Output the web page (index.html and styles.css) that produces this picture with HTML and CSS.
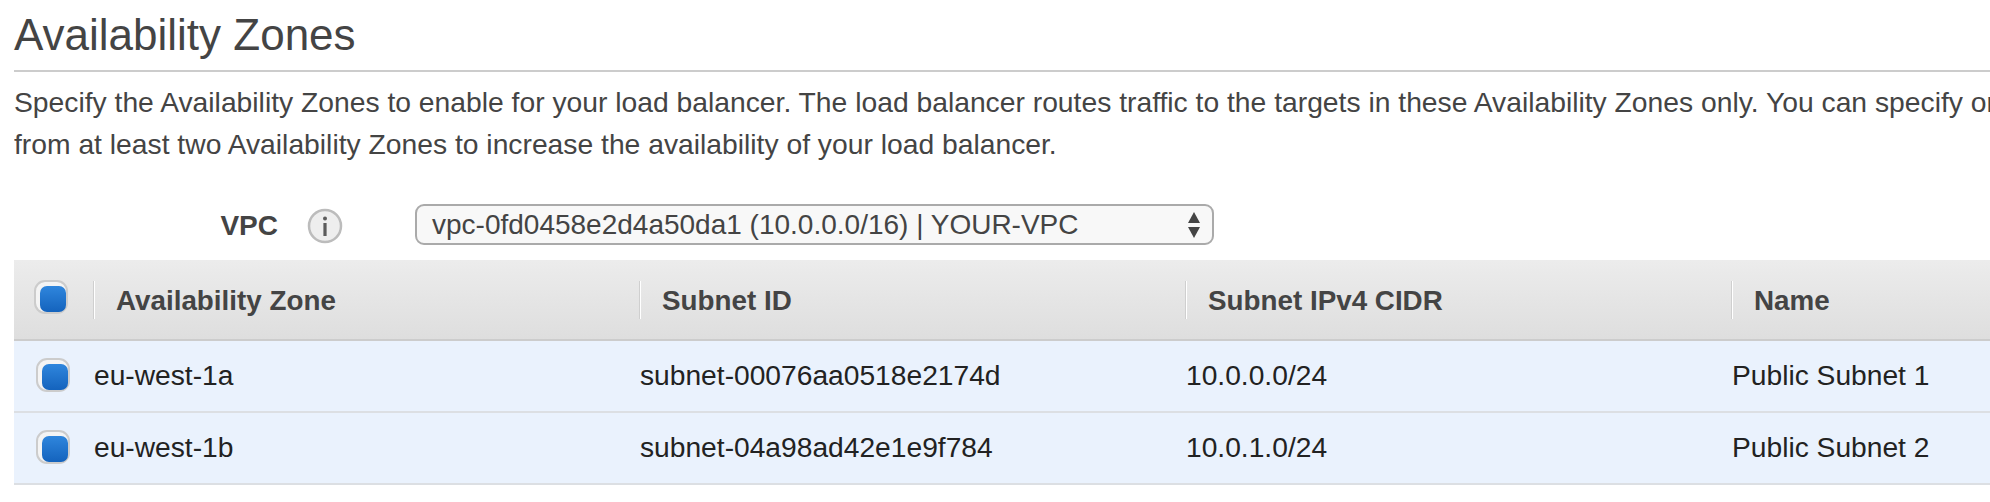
FILE: index.html
```html
<!DOCTYPE html>
<html lang="en">
  <head>
    <title>Availability Zones</title>
    <link rel="stylesheet" href="styles.css">
  </head>
  <body>
    <div class="section">
      <h2 class="section-title">Availability Zones</h2>
      <p class="section-info">Specify the Availability Zones to enable for your load balancer. The load balancer routes traffic to the targets in these Availability Zones only. You can specify only one subnet per Availability Zone. You must specify subnets<br>from at least two Availability Zones to increase the availability of your load balancer.</p>

      <div class="vpc-row">
        <label class="vpc-label">VPC</label>
        <span class="info-icon">
          <svg width="36" height="36" viewBox="0 0 36 36">
            <circle cx="18" cy="18" r="16" fill="#eeeeee" stroke="#bcbcbc" stroke-width="2.5"/>
            <circle cx="18" cy="10.5" r="2" fill="#5c5c5c"/>
            <rect x="16.4" y="15" width="3.2" height="13" fill="#5c5c5c"/>
          </svg>
        </span>
        <div class="vpc-select">
          <span>vpc-0fd0458e2d4a50da1 (10.0.0.0/16) | YOUR-VPC</span>
          <svg class="select-arrows" width="14" height="28" viewBox="0 0 14 28">
            <path d="M7 1 L13 12 L1 12 Z" fill="#444"/>
            <path d="M1 16 L13 16 L7 27 Z" fill="#444"/>
          </svg>
        </div>
      </div>

      <div class="zones">
        <div class="zones-row zones-head">
          <div class="cell-check"><span class="check"></span></div>
          <div class="cell"><span class="head-label">Availability Zone</span></div>
          <div class="cell"><span class="head-label">Subnet ID</span></div>
          <div class="cell"><span class="head-label">Subnet IPv4 CIDR</span></div>
          <div class="cell"><span class="head-label">Name</span></div>
        </div>
        <div class="zones-row zones-item">
          <div class="cell-check"><span class="check"></span></div>
          <div class="cell">eu-west-1a</div>
          <div class="cell">subnet-00076aa0518e2174d</div>
          <div class="cell">10.0.0.0/24</div>
          <div class="cell">Public Subnet 1</div>
        </div>
        <div class="zones-row zones-item">
          <div class="cell-check"><span class="check"></span></div>
          <div class="cell">eu-west-1b</div>
          <div class="cell">subnet-04a98ad42e1e9f784</div>
          <div class="cell">10.0.1.0/24</div>
          <div class="cell">Public Subnet 2</div>
        </div>
      </div>
    </div>
  </body>
</html>
```

FILE: styles.css
```css
html, body { margin: 0; padding: 0; background: #fff; overflow: hidden; }
body { font-family: "Liberation Sans", Arial, sans-serif; color: #444; }

.section { padding-left: 14px; }
.section-title { margin: 0; height: 70px; line-height: 70px; font-size: 44px; font-weight: normal; color: #444; border-bottom: 2px solid #ccc; }
.section-info { margin: 10px 0 0; font-size: 28.28px; line-height: 41.5px; white-space: nowrap; overflow: hidden; color: #444; }

.vpc-row { display: flex; align-items: center; height: 41px; margin-top: 39px; }
.vpc-label { width: 264px; text-align: right; font-size: 28px; font-weight: bold; color: #444; padding-top: 3px; }
.info-icon { display: flex; margin-left: 29px; margin-top: 3px; }
.vpc-select { display: flex; align-items: center; justify-content: space-between; box-sizing: border-box; width: 799px; height: 41px; margin-left: 72px; padding: 0 11px 0 15px; font-size: 28px; color: #444; background: #f8f8f8; border: 2px solid #aaa; border-radius: 9px; }

.zones { margin-top: 15px; }
.zones-row { display: grid; grid-template-columns: 79px 546px 546px 546px 1fr; box-sizing: border-box; }
.zones-head { height: 81px; background: linear-gradient(#ececec, #dedede); border-bottom: 2px solid #ccc; font-size: 27.8px; font-weight: bold; color: #444; }
.zones-item { height: 72px; background: #eaf2fd; border-bottom: 2px solid #dcdfe3; font-size: 28.2px; color: #222; }

.cell { display: flex; align-items: center; }
.zones-item .cell { padding: 0 0 1px 1px; }
.cell-check { display: flex; align-items: center; padding: 0 0 5px 20px; }
.zones-item .cell-check { padding: 0 0 2px 22px; }
.head-label { display: flex; align-items: center; box-sizing: border-box; height: 38px; padding: 2px 0 0 22px; border-left: 1px solid #cfcfcf; box-shadow: inset 1px 0 0 #fff; }

.check { display: block; box-sizing: border-box; width: 34px; height: 34px; padding: 4px 0 0 4px; background: #f4f4f4; border: 2px solid #ccc; border-radius: 11px; background-clip: padding-box; }
.check::before { content: ""; display: block; width: 100%; height: 100%; border-radius: 7px; background: linear-gradient(#2f86dd, #1463bd); }
```
